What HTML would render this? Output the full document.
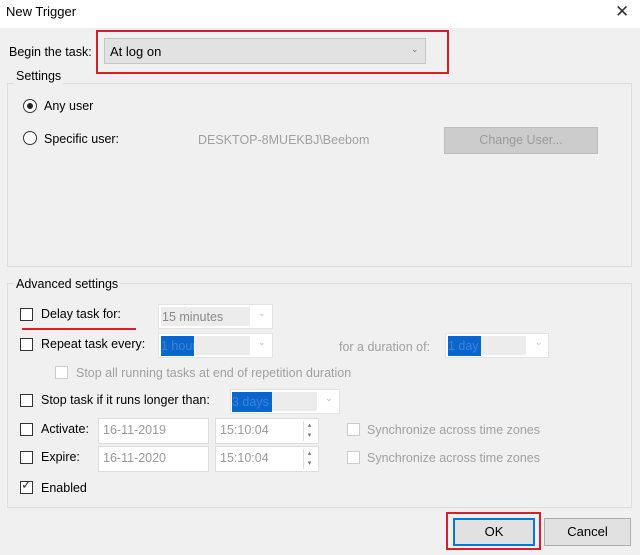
<!DOCTYPE html><html><head><style>
*{box-sizing:border-box}
body{margin:0;width:640px;height:555px;background:#f0f0f0;font-family:"Liberation Sans",sans-serif;font-size:12.5px;color:#000;position:relative;overflow:hidden}
.a{position:absolute;white-space:nowrap}
.t{line-height:16px}
.cb{position:absolute;width:13px;height:13px;border:1px solid #333;background:#fff}
.cb.d{border-color:#ccc}
.rd{position:absolute;width:14px;height:14px;border:1px solid #333;border-radius:50%;background:#fff}
.g{color:#a0a0a0}
.fld{position:absolute;background:#fff;border:1px solid #ddd;color:#999;line-height:22px;padding-left:4px}
.cmb{position:absolute;background:#fff;border:1px solid #e3e3e3}
.cmb i{position:absolute;left:2px;top:2px;bottom:2px;background:#ececec;right:22px}
.hl{position:absolute;background:#0a66cc;color:#3b84d8;line-height:20px;height:20px;white-space:nowrap;overflow:hidden}
.grp{position:absolute;border:1px solid #dcdcdc}
</style></head><body>
<div class="a" style="left:0;top:0;width:640px;height:28px;background:#fff"></div>
<div class="a t" style="left:6px;top:4px;font-size:13px">New Trigger</div>
<div class="a" style="left:615px;top:2px;font-size:17px;color:#333">✕</div>

<div class="a t" style="left:9px;top:44px">Begin the task:</div>
<div class="a" style="left:96px;top:30px;width:353px;height:44px;border:2px solid #d3202a"></div>
<div class="a" style="left:104px;top:38px;width:322px;height:26px;background:#e2e2e2;border:1px solid #c6c6c6"></div>
<div class="a t" style="left:110px;top:44px;font-size:13px">At log on</div>
<div class="a" style="left:411px;top:44px;font-size:9px;color:#777">⌄</div>

<div class="grp" style="left:7px;top:83px;width:625px;height:184px"></div>
<div class="a t" style="left:14px;top:68px;background:#f0f0f0;padding:0 2px">Settings</div>
<div class="rd" style="left:23px;top:99px"></div><div class="a" style="left:27px;top:103px;width:6px;height:6px;border-radius:50%;background:#222"></div>
<div class="a t" style="left:44px;top:98px">Any user</div>
<div class="rd" style="left:23px;top:131px"></div>
<div class="a t" style="left:44px;top:131px">Specific user:</div>
<div class="a t g" style="left:198px;top:132px">DESKTOP-8MUEKBJ\Beebom</div>
<div class="a" style="left:444px;top:127px;width:154px;height:27px;background:#ccc;border:1px solid #bdbdbd;color:#9a9a9a;text-align:center;line-height:25px">Change User...</div>

<div class="grp" style="left:7px;top:283px;width:625px;height:225px"></div>
<div class="a t" style="left:14px;top:276px;background:#f0f0f0;padding:0 2px">Advanced settings</div>

<div class="cb" style="left:20px;top:308px"></div>
<div class="a t" style="left:41px;top:306px">Delay task for:</div>
<div class="a" style="left:22px;top:328px;width:114px;height:2px;background:#d3202a"></div>
<div class="cmb" style="left:158px;top:304px;width:115px;height:25px"><i></i></div>
<div class="a t" style="left:162px;top:309px;color:#888">15 minutes</div><div class="a" style="left:258px;top:308px;color:#bbb;font-size:9px">⌄</div>

<div class="cb" style="left:20px;top:338px"></div>
<div class="a t" style="left:41px;top:336px">Repeat task every:</div>
<div class="cmb" style="left:158px;top:333px;width:115px;height:25px"><i></i></div>
<div class="hl" style="left:161px;top:336px;width:33px">1 hour</div><div class="a" style="left:258px;top:337px;color:#bbb;font-size:9px">⌄</div>
<div class="a t g" style="left:339px;top:339px">for a duration of:</div>
<div class="cmb" style="left:445px;top:333px;width:104px;height:25px"><i></i></div>
<div class="hl" style="left:448px;top:336px;width:33px">1 day</div><div class="a" style="left:535px;top:337px;color:#bbb;font-size:9px">⌄</div>

<div class="cb d" style="left:55px;top:366px"></div>
<div class="a t g" style="left:76px;top:365px">Stop all running tasks at end of repetition duration</div>

<div class="cb" style="left:20px;top:394px"></div>
<div class="a t" style="left:41px;top:392px">Stop task if it runs longer than:</div>
<div class="cmb" style="left:230px;top:389px;width:110px;height:25px"><i></i></div>
<div class="hl" style="left:232px;top:392px;width:40px">3 days</div><div class="a" style="left:325px;top:393px;color:#bbb;font-size:9px">⌄</div>

<div class="cb" style="left:20px;top:423px"></div>
<div class="a t" style="left:41px;top:421px">Activate:</div>
<div class="fld" style="left:98px;top:418px;width:111px;height:26px">16-11-2019</div>
<div class="fld" style="left:215px;top:418px;width:104px;height:26px">15:10:04</div>
<div class="a" style="left:303px;top:421px;width:12px;height:20px;border-left:1px solid #ddd;color:#777;font-size:7px;line-height:10px;text-align:center">▴<br>▾</div>
<div class="cb d" style="left:347px;top:423px"></div>
<div class="a t g" style="left:367px;top:422px">Synchronize across time zones</div>

<div class="cb" style="left:20px;top:451px"></div>
<div class="a t" style="left:41px;top:449px">Expire:</div>
<div class="fld" style="left:98px;top:446px;width:111px;height:26px">16-11-2020</div>
<div class="fld" style="left:215px;top:446px;width:104px;height:26px">15:10:04</div>
<div class="a" style="left:303px;top:449px;width:12px;height:20px;border-left:1px solid #ddd;color:#777;font-size:7px;line-height:10px;text-align:center">▴<br>▾</div>
<div class="cb d" style="left:347px;top:451px"></div>
<div class="a t g" style="left:367px;top:450px">Synchronize across time zones</div>

<div class="cb" style="left:20px;top:481px"></div><div class="a" style="left:21px;top:477px;font-size:13px;color:#333">✓</div>
<div class="a t" style="left:41px;top:480px">Enabled</div>

<div class="a" style="left:446px;top:512px;width:95px;height:38px;border:2px solid #d3202a"></div>
<div class="a" style="left:453px;top:518px;width:82px;height:28px;background:#e1e1e1;border:2px solid #0078d7;text-align:center;line-height:24px;font-size:13px">OK</div>
<div class="a" style="left:544px;top:518px;width:87px;height:28px;background:#e1e1e1;border:1px solid #adadad;text-align:center;line-height:26px;font-size:13px">Cancel</div>
</body></html>
